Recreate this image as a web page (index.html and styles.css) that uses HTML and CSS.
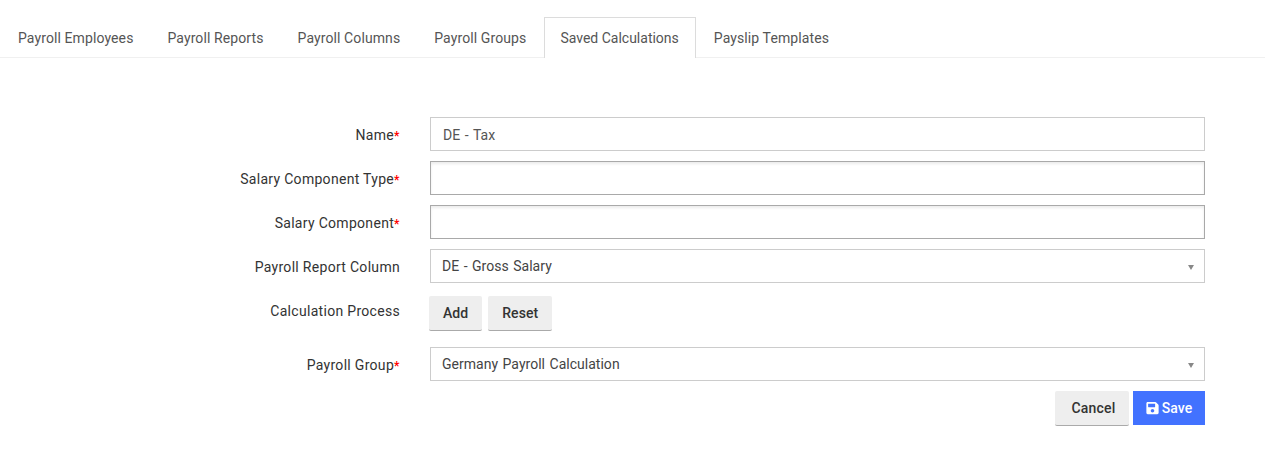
FILE: index.html
```html
<!DOCTYPE html>
<html lang="en">
<head>
<meta charset="utf-8">
<title>Saved Calculations</title>
<link rel="stylesheet" href="styles.css">
</head>
<body>
<nav class="tabs">
  <a class="tab">Payroll Employees</a>
  <a class="tab">Payroll Reports</a>
  <a class="tab">Payroll Columns</a>
  <a class="tab">Payroll Groups</a>
  <a class="tab active">Saved Calculations</a>
  <a class="tab">Payslip Templates</a>
</nav>
<form class="form">
  <div class="row">
    <label class="label">Name<span class="req">*</span></label>
    <div class="field text">DE - Tax</div>
  </div>
  <div class="row">
    <label class="label">Salary Component Type<span class="req">*</span></label>
    <div class="field empty"></div>
  </div>
  <div class="row">
    <label class="label">Salary Component<span class="req">*</span></label>
    <div class="field empty"></div>
  </div>
  <div class="row">
    <label class="label">Payroll Report Column</label>
    <div class="field select">DE - Gross Salary<span class="caret"></span></div>
  </div>
  <div class="row row-buttons">
    <label class="label">Calculation Process</label>
    <div class="btn-group">
      <button type="button" class="btn">Add</button>
      <button type="button" class="btn">Reset</button>
    </div>
  </div>
  <div class="row">
    <label class="label">Payroll Group<span class="req">*</span></label>
    <div class="field select">Germany Payroll Calculation<span class="caret"></span></div>
  </div>
  <div class="actions">
    <button type="button" class="btn btn-cancel">Cancel</button>
    <button type="button" class="btn btn-save">
      <svg class="save-icon" viewBox="0 0 448 512" aria-hidden="true"><path fill="currentColor" d="M433.9 129.9l-83.9-83.900A48 48 0 0 0 316.100 32H48C21.500 32 0 53.500 0 80v352c0 26.500 21.500 48 48 48h352c26.500 0 48-21.500 48-48V163.900a48 48 0 0 0-14.100-34zM224 416c-35.300 0-64-28.700-64-64 0-35.300 28.700-64 64-64s64 28.700 64 64c0 35.300-28.700 64-64 64zm96-304.500V212c0 6.600-5.400 12-12 12H76c-6.600 0-12-5.400-12-12V108c0-6.600 5.400-12 12-12h228.500c3.200 0 6.200 1.300 8.500 3.500l3.500 3.500c2.200 2.200 3.500 5.300 3.500 8.500z"/></svg>Save
    </button>
  </div>
</form>
</body>
</html>
```
FILE: styles.css
```css
html, body {
  margin: 0;
  padding: 0;
  background: #fff;
}
body {
  font-family: Roboto, "Liberation Sans", sans-serif;
  font-size: 14px;
  color: #333;
  width: 1265px;
  height: 458px;
  overflow: hidden;
}
.tabs {
  display: flex;
  margin-top: 17px;
  padding-left: 1px;
  border-bottom: 1px solid #f0f0f0;
  height: 40px;
}
.tab {
  box-sizing: border-box;
  height: 41px;
  padding: 0 16px;
  line-height: 41px;
  font-size: 14px;
  letter-spacing: 0.1px;
  color: #555;
  border: 1px solid transparent;
  border-bottom: 0;
}
.tab.active {
  background: #fff;
  border-color: #dcdcdc;
  padding: 0 16px 0 15px;
  margin-left: 1px;
  margin-right: 1px;
  letter-spacing: 0;
}
.form {
  margin-top: 59px;
  width: 1205px;
}
.row {
  display: flex;
  align-items: flex-start;
  height: 34px;
  margin-bottom: 10px;
}
.label {
  box-sizing: border-box;
  width: 400px;
  flex: none;
  text-align: right;
  line-height: 36px;
  font-size: 14px;
  letter-spacing: 0.3px;
  color: #333;
}
.req {
  color: #f00;
  font-size: 12px;
  font-weight: 700;
  letter-spacing: 0;
  margin-right: 0.500px;
}
.field {
  box-sizing: border-box;
  flex: 1;
  margin-left: 30px;
  height: 34px;
  line-height: 34px;
  padding: 0 12px;
  border: 1px solid #ccc;
  position: relative;
  font-size: 14px;
  letter-spacing: 0.05px;
  word-spacing: 1px;
  color: #444;
}
.text { color: #555; }
.select {
  padding-left: 11px;
  line-height: 32px;
  letter-spacing: 0.02px;
}
.empty {
  border-color: #a9a9a9;
  box-shadow: inset 0 2px 3px rgba(0, 0, 0, .08);
}
.caret {
  position: absolute;
  right: 10px;
  top: 15px;
  width: 0;
  height: 0;
  border-left: 3.500px solid transparent;
  border-right: 3.500px solid transparent;
  border-top: 5px solid #888;
}
.row-buttons {
  margin-bottom: 16px;
  height: 38px;
}
.btn-group {
  margin-left: 29px;
  display: flex;
  gap: 6px;
  margin-top: 3px;
}
.btn {
  box-sizing: border-box;
  height: 35px;
  padding: 0 14px;
  border: 0;
  border-bottom: 1px solid #aaa;
  border-radius: 2px;
  background: #eee;
  font-family: inherit;
  font-size: 14px;
  font-weight: 500;
  letter-spacing: 0.05px;
  color: #333;
}
.actions {
  display: flex;
  justify-content: flex-end;
  gap: 4px;
}
.btn-cancel {
  width: 74px;
  padding: 0 0 0 3px;
  letter-spacing: 0.2px;
}
.btn-save {
  width: 72px;
  height: 34px;
  padding: 0;
  border: 0;
  border-radius: 0;
  background: #4272ff;
  color: #fff;
  display: flex;
  align-items: center;
  justify-content: center;
  gap: 3px;
}
.save-icon {
  width: 13px;
  height: 14px;
}
```
